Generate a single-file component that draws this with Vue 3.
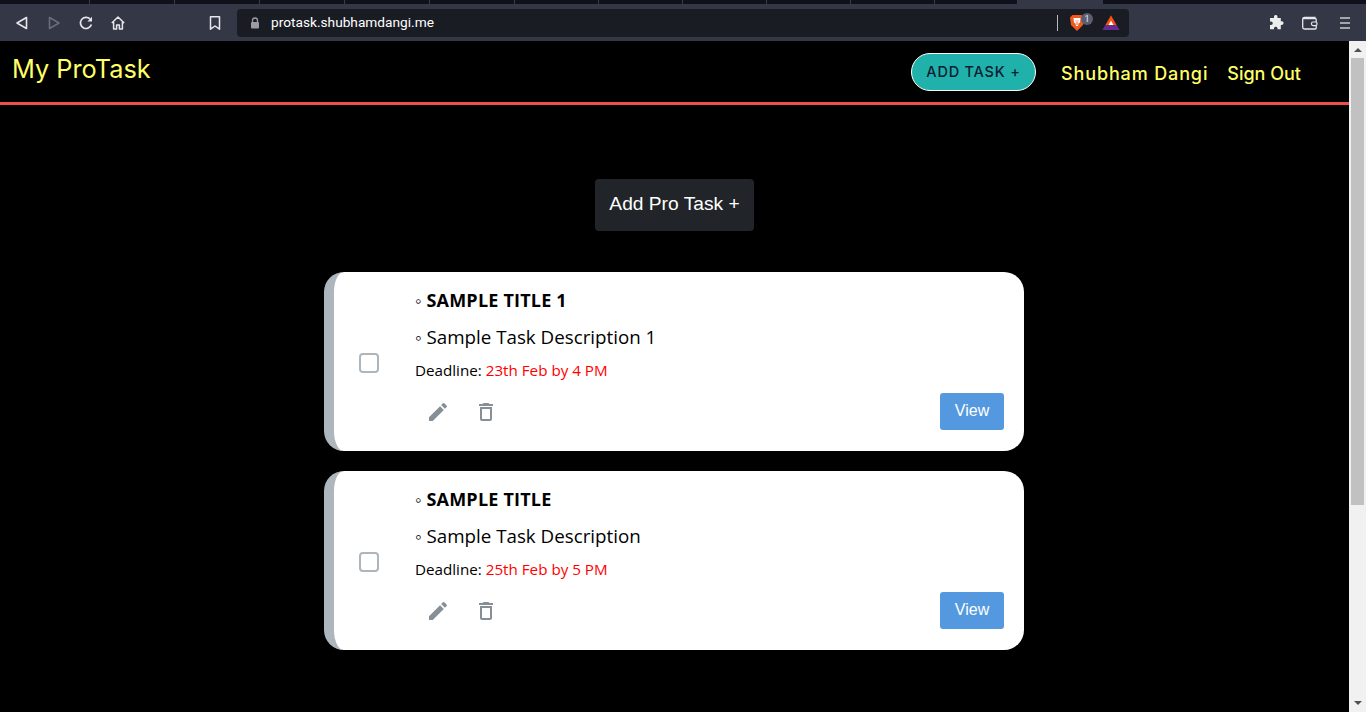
<template>
  <div class="browser">
    <!-- tab strip -->
    <div class="tab-strip">
      <div v-for="(w, i) in tabWidths" :key="i" class="tab" :style="{ width: w + 'px' }"></div>
      <div class="tab active"></div>
    </div>

    <!-- toolbar -->
    <div class="toolbar">
      <div class="nav-icons">
        <svg class="ico" width="16" height="16" viewBox="0 0 16 16"><path d="M12.500 2.500v11L3 8z" fill="none" stroke="#e6e7ea" stroke-width="1.600" stroke-linejoin="round"/></svg>
        <svg class="ico" width="16" height="16" viewBox="0 0 16 16"><path d="M3.500 2.500v11L13 8z" fill="none" stroke="#6a6d7a" stroke-width="1.600" stroke-linejoin="round"/></svg>
        <svg class="ico" width="16" height="16" viewBox="0 0 16 16"><path d="M13.400 9.600A5.600 5.600 0 1 1 12 3.900" fill="none" stroke="#e6e7ea" stroke-width="1.700"/><path d="M14 1.800v4.600H9.400z" fill="#e6e7ea"/></svg>
        <svg class="ico" width="16" height="16" viewBox="0 0 16 16"><path d="M1.800 8 8 2l6.200 6M3.600 7v7h3v-4h2.800v4h3V7" fill="none" stroke="#e6e7ea" stroke-width="1.500" stroke-linejoin="round"/></svg>
      </div>
      <svg class="bookmark" width="16" height="16" viewBox="0 0 16 16"><path d="M3.500 1.800h9v12.400L8 11l-4.500 3.200z" fill="none" stroke="#e6e7ea" stroke-width="1.500" stroke-linejoin="round"/></svg>
      <div class="address">
        <svg width="10" height="12" viewBox="0 0 10 12"><path d="M2.500 5V3.500a2.500 2.500 0 0 1 5 0V5" fill="none" stroke="#9a9ba3" stroke-width="1.300"/><rect x="1" y="5" width="8" height="6.500" rx="1" fill="#9a9ba3"/></svg>
        <span class="url">protask.shubhamdangi.me</span>
        <span class="sep"></span>
        <span class="shield">
          <svg width="16" height="18" viewBox="0 0 16 18"><path d="M3.500 1h9L15 3.500 14 11l-6 6-6-6L1 3.500z" fill="#f0581f"/><path d="M4.500 4h7L11 8.500l-1.500 1-.5 2.500H7l-.5-2.500-1.500-1z" fill="#fff"/><path d="M6.500 7h1M8.500 7h1M8 8v3" stroke="#f0581f" stroke-width="1"/></svg>
          <span class="badge">1</span>
        </span>
        <svg class="bat" width="18" height="16" viewBox="0 0 18 16"><path d="M9 .5 17.500 15H.5z" fill="#662d91"/><path d="M9 .5 14.500 10h-11z" fill="#ff5000"/><path d="M9 5.500 11.500 10h-5z" fill="#fff"/><path d="M3.500 10h11l3 5H.5z" fill="#662d91"/></svg>
      </div>
      <div class="right-icons">
        <svg width="16" height="16" viewBox="0 0 16 16"><path d="M6 1.500a1.800 1.800 0 0 1 3.500 0V3h3.300v3.300h1a1.800 1.800 0 0 1 0 3.600h-1v4.300H9.500v-1a1.800 1.800 0 0 0-3.500 0v1H2V10h1a1.800 1.800 0 0 0 0-3.600H2V3h4z" fill="#eceded"/></svg>
        <svg width="17" height="16" viewBox="0 0 17 16"><path d="M14 3.500V2.300H3.500A1.800 1.800 0 0 0 1.700 4v8.200c0 1 .8 1.800 1.800 1.800h10.700c.6 0 1-.4 1-1V4.500c0-.6-.4-1-1-1H2" fill="none" stroke="#e6e7ea" stroke-width="1.300"/><rect x="10.500" y="7" width="5.500" height="3.600" rx="1.500" fill="#343746" stroke="#e6e7ea" stroke-width="1.200"/></svg>
        <svg width="16" height="16" viewBox="0 0 16 16"><path d="M5 3h10M5 8h10M5 13h10" stroke="#c9cacf" stroke-width="1.700"/></svg>
      </div>
    </div>

    <div class="viewport">
      <div class="page">
        <!-- navbar -->
        <nav class="navbar">
          <a class="brand">My ProTask</a>
          <div class="nav-right">
            <button class="add-pill">ADD TASK +</button>
            <a class="nav-link user">Shubham Dangi</a>
            <a class="nav-link">Sign Out</a>
          </div>
        </nav>

        <div class="content">
          <button class="add-pro">Add Pro Task +</button>

          <div v-for="task in tasks" :key="task.title" class="card">
            <div class="check-col">
              <span class="check"></span>
            </div>
            <div class="body">
              <div class="title">◦ <b>{{ task.title }}</b></div>
              <div class="desc">◦ {{ task.desc }}</div>
              <div class="deadline">Deadline: <span class="date">{{ task.deadline }}</span></div>
              <div class="actions">
                <svg class="edit" width="24" height="24" viewBox="0 0 24 24"><path d="M3 17.250V21h3.750L17.810 9.940l-3.750-3.750L3 17.250zM20.710 7.040a1 1 0 0 0 0-1.410l-2.340-2.340a1 1 0 0 0-1.410 0l-1.830 1.830 3.750 3.750 1.830-1.830z" fill="#868e96"/></svg>
                <svg class="trash" width="24" height="24" viewBox="0 0 24 24"><path d="M6 19c0 1.100.9 2 2 2h8c1.100 0 2-.9 2-2V7H6v12zM8 9h8v10H8V9zm7.500-5-1-1h-5l-1 1H5v2h14V4h-3.500z" fill="#868e96"/></svg>
                <button class="view">View</button>
              </div>
            </div>
          </div>
        </div>
      </div>

      <!-- scrollbar -->
      <div class="scrollbar">
        <span class="arrow up"></span>
        <span class="thumb"></span>
        <span class="arrow down"></span>
      </div>
    </div>
  </div>
</template>

<script setup>
const tabWidths = [90, 85, 85, 85, 85, 85, 84, 84, 84, 84, 84, 83]

const tasks = [
  { title: 'SAMPLE TITLE 1', desc: 'Sample Task Description 1', deadline: '23th Feb by 4 PM' },
  { title: 'SAMPLE TITLE', desc: 'Sample Task Description', deadline: '25th Feb by 5 PM' }
]
</script>

<style>
html, body {
  margin: 0;
  height: 100%;
  overflow: hidden;
  background: #000;
}
</style>

<style scoped>
* {
  box-sizing: border-box;
}
.browser {
  width: 1366px;
  height: 712px;
  display: flex;
  flex-direction: column;
  background: #000;
  font-family: "Liberation Sans", sans-serif;
}

/* browser chrome */
.tab-strip {
  height: 4px;
  display: flex;
  background: #0f101a;
}
.tab {
  border-right: 1px solid #3a3c48;
}
.tab.active {
  width: 85px;
  background: #343746;
  border-right: none;
}
.toolbar {
  height: 37px;
  background: #343746;
  display: flex;
  align-items: center;
}
.nav-icons {
  display: flex;
  gap: 16px;
  margin-left: 14px;
}
.bookmark {
  margin-left: 81px;
}
.address {
  margin-left: 14px;
  width: 892px;
  height: 28px;
  background: #1a1c24;
  border-radius: 4px;
  display: flex;
  align-items: center;
  padding-left: 13px;
}
.url {
  margin-left: 11px;
  padding-bottom: 2px;
  color: #fff;
  font: 13.700px "Roboto", sans-serif;
  flex: 1;
}
.sep {
  width: 1px;
  height: 16px;
  background: #b9bac0;
  margin-right: 11px;
}
.shield {
  position: relative;
  display: flex;
  width: 16px;
}
.badge {
  position: absolute;
  left: 12px;
  top: -1px;
  width: 12px;
  height: 12px;
  border-radius: 50%;
  background: #5a5e72;
  color: #e6e7ea;
  font: 9px/12px "Roboto", sans-serif;
  text-align: center;
}
.bat {
  margin-left: 17px;
  margin-right: 9px;
}
.right-icons {
  margin-left: 139px;
  display: flex;
  gap: 17px;
}

/* page */
.viewport {
  flex: 1;
  display: flex;
  min-height: 0;
}
.page {
  flex: 1;
  min-width: 0;
  background: #000;
}
.scrollbar {
  width: 17px;
  background: #f1f1f1;
  display: flex;
  flex-direction: column;
  align-items: center;
}
.arrow {
  width: 0;
  height: 0;
  border-left: 4px solid transparent;
  border-right: 4px solid transparent;
}
.arrow.up {
  margin-top: 7px;
  border-bottom: 4px solid #505050;
}
.arrow.down {
  margin-top: auto;
  margin-bottom: 7px;
  border-top: 4px solid #505050;
}
.thumb {
  width: 13px;
  height: 447px;
  margin-top: 6px;
  background: #c1c1c1;
}

.navbar {
  height: 64px;
  border-bottom: 3px solid #f14e4e;
  display: flex;
  justify-content: space-between;
  padding: 0 48px 0 12px;
}
.brand {
  font: 25.300px/56px "Inter", sans-serif;
  color: #ffff66;
}
.nav-right {
  display: flex;
  align-items: center;
}
.add-pill {
  width: 125px;
  height: 38px;
  border: 1px solid #fff;
  border-radius: 19px;
  background: #20b2aa;
  color: #0b1d33;
  font: 500 14.500px "Inter", sans-serif;
  letter-spacing: .8px;
  padding: 0;
  margin-right: 25px;
}
.nav-link {
  font: 500 18px "Inter", sans-serif;
  color: #ffff66;
  margin-top: 4px;
}
.nav-link.user {
  margin-right: 19px;
  letter-spacing: .87px;
}
.content {
  display: flex;
  flex-direction: column;
  align-items: center;
  padding-top: 74px;
}
.add-pro {
  width: 159px;
  height: 52px;
  background: #212529;
  color: #fff;
  border: none;
  border-radius: 4px;
  font: 19.200px "Liberation Sans", sans-serif;
  padding: 0 0 2px;
  margin-bottom: 41px;
}
.card {
  width: 700px;
  height: 179px;
  background: #fff;
  border-left: 10px solid #adb5bd;
  border-radius: 20px;
  display: flex;
  margin: 0 1px 20px 0;
  font-family: "Open Sans", sans-serif;
  color: #000;
}
.check-col {
  width: 81px;
  display: flex;
  align-items: center;
  padding: 2px 0 0 25px;
}
.check {
  width: 20px;
  height: 20px;
  border: 2px solid #adb5bd;
  border-radius: 4px;
}
.body {
  flex: 1;
  padding: 16px 20px 21px 0;
  display: flex;
  flex-direction: column;
}
.title {
  font-size: 18px;
  line-height: 25px;
  letter-spacing: .2px;
}
.desc {
  font-size: 18.750px;
  line-height: 27px;
  margin-top: 10px;
}
.deadline {
  font-size: 15.200px;
  line-height: 20px;
  margin-top: 10px;
}
.date {
  color: #f00;
}
.actions {
  display: flex;
  align-items: center;
  margin-top: auto;
}
.edit {
  margin-left: 11px;
}
.trash {
  margin-left: 24px;
}
.view {
  margin-left: auto;
  width: 64px;
  height: 37px;
  background: #5499e0;
  color: #fff;
  border: none;
  border-radius: 3px;
  font: 16px "Liberation Sans", sans-serif;
  padding: 0 0 2px;
}
</style>
